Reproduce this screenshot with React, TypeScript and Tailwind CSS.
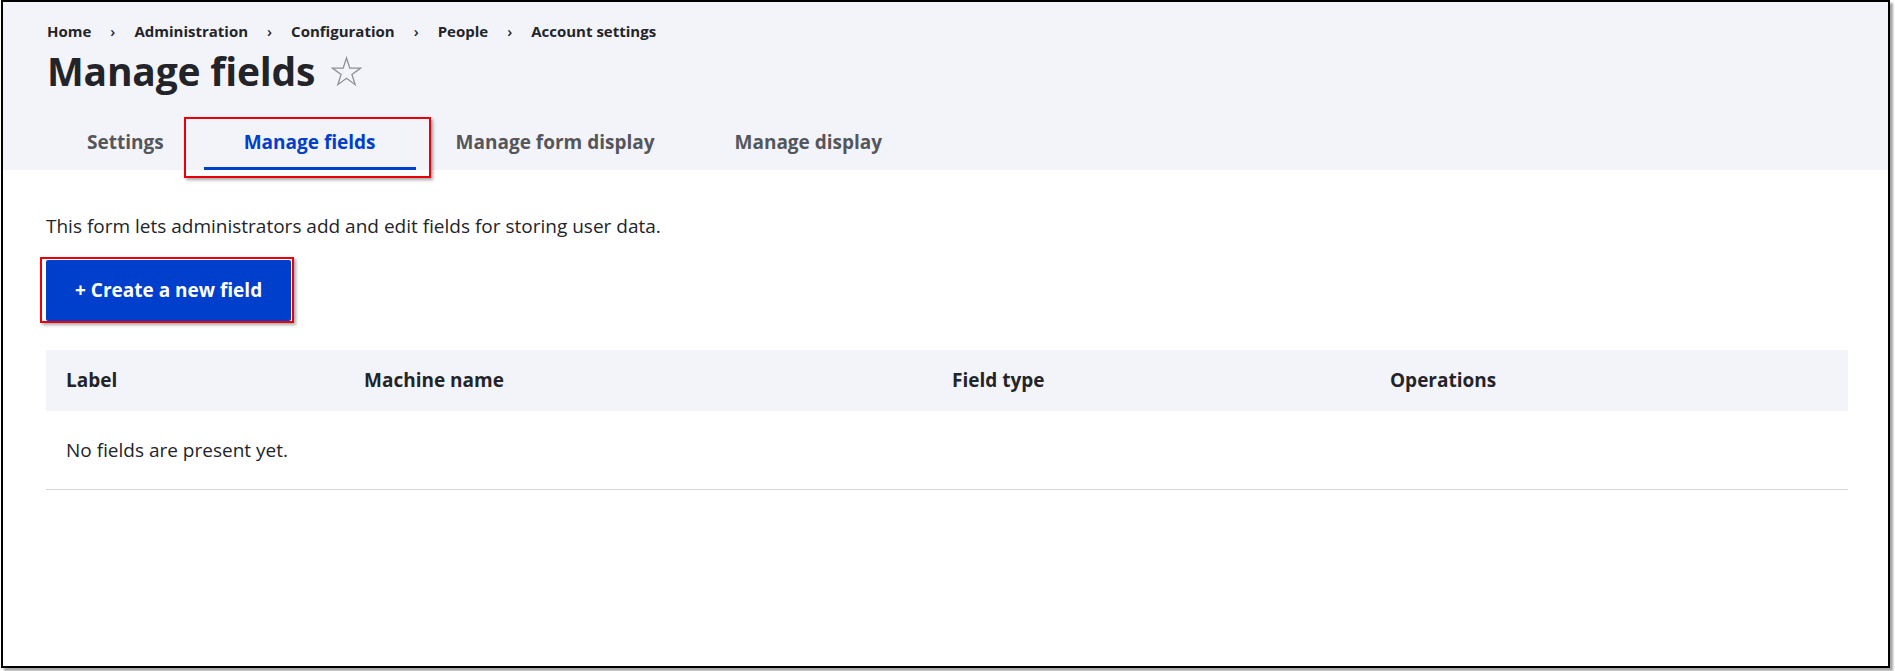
import React from "react";

type Tab = { label: string; active?: boolean };

const CRUMBS = ["Home", "Administration", "Configuration", "People", "Account settings"];

const TABS: Tab[] = [
  { label: "Settings" },
  { label: "Manage fields", active: true },
  { label: "Manage form display" },
  { label: "Manage display" },
];

export default function App() {
  return (
    <div
      className="w-[1895px] h-[671px] bg-white text-[#232429]"
      style={{ fontFamily: "'Open Sans', 'Noto Sans', sans-serif" }}
    >
      <div className="relative ml-px w-[1889px] h-[668px] border-2 border-black shadow-[3px_3px_2px_rgba(0,0,0,0.35)] flex flex-col">
        {/* Header */}
        <header className="bg-[#f3f4f9] pl-[44px] pt-[19px]">
          <nav className="flex items-center text-[15px] font-bold leading-[20px]">
            {CRUMBS.map((c, i) => (
              <React.Fragment key={c}>
                {i > 0 && <span className="mx-[19px] font-semibold">›</span>}
                <span>{c}</span>
              </React.Fragment>
            ))}
          </nav>

          <h1 className="mt-[6px] flex items-center text-[39px] font-bold leading-[48px] tracking-[-0.2px]">
            Manage fields
            <IcoStar className="ml-[16px] w-[31px] h-[31px] text-[#8e9099]" />
          </h1>

          <div className="mt-[19px] flex">
            {TABS.map(({ label, active }) => (
              <div
                key={label}
                className={`relative h-[56px] px-[40px] flex items-center text-[19px] font-bold ${
                  active ? "text-[#003ecc]" : "text-[#55565b]"
                }`}
              >
                {label}
                {active && (
                  <>
                    <span className="absolute left-0 right-0 bottom-0 h-[3px] bg-[#003ecc]" />
                    <span className="absolute -left-[20px] -right-[15px] top-[3px] -bottom-[8px] border-2 border-[#e8000b] shadow-[2px_2px_3px_rgba(0,0,0,0.35)]" />
                  </>
                )}
              </div>
            ))}
          </div>
        </header>

        {/* Content */}
        <main className="pl-[43px] pr-[40px] pt-[43px]">
          <p className="text-[19px] leading-[26px] text-[#232429]">
            This form lets administrators add and edit fields for storing user data.
          </p>

          <div className="relative mt-[21px] w-fit">
            <button className="h-[61px] px-[29px] bg-[#003ecc] text-white text-[19px] font-bold rounded-[2px]">
              + Create a new field
            </button>
            <span className="absolute -left-[6px] -right-[3px] -top-[3px] -bottom-[2px] border-2 border-[#e8000b] shadow-[2px_2px_3px_rgba(0,0,0,0.35)]" />
          </div>

          <div className="mt-[29px]">
            <div className="grid grid-cols-[298px_588px_438px_1fr] h-[61px] items-center bg-[#f3f4f9] text-[19px] font-bold">
              <div className="pl-[20px]">Label</div>
              <div className="pl-[20px]">Machine name</div>
              <div className="pl-[20px]">Field type</div>
              <div className="pl-[20px]">Operations</div>
            </div>
            <div className="h-[79px] flex items-center pl-[20px] border-b border-[#d4d4d8] text-[19px]">
              No fields are present yet.
            </div>
          </div>
        </main>
      </div>
    </div>
  );
}

function IcoStar(p: React.SVGProps<SVGSVGElement>) {
  return (
    <svg {...p} viewBox="0 0 24 24" fill="none" stroke="currentColor" strokeWidth="1" strokeLinejoin="miter">
      <path d="M12 1.5l2.6 7.9h8.3l-6.7 4.9 2.5 7.9L12 17.3l-6.7 4.9 2.5-7.9-6.7-4.9h8.3z" />
    </svg>
  );
}
